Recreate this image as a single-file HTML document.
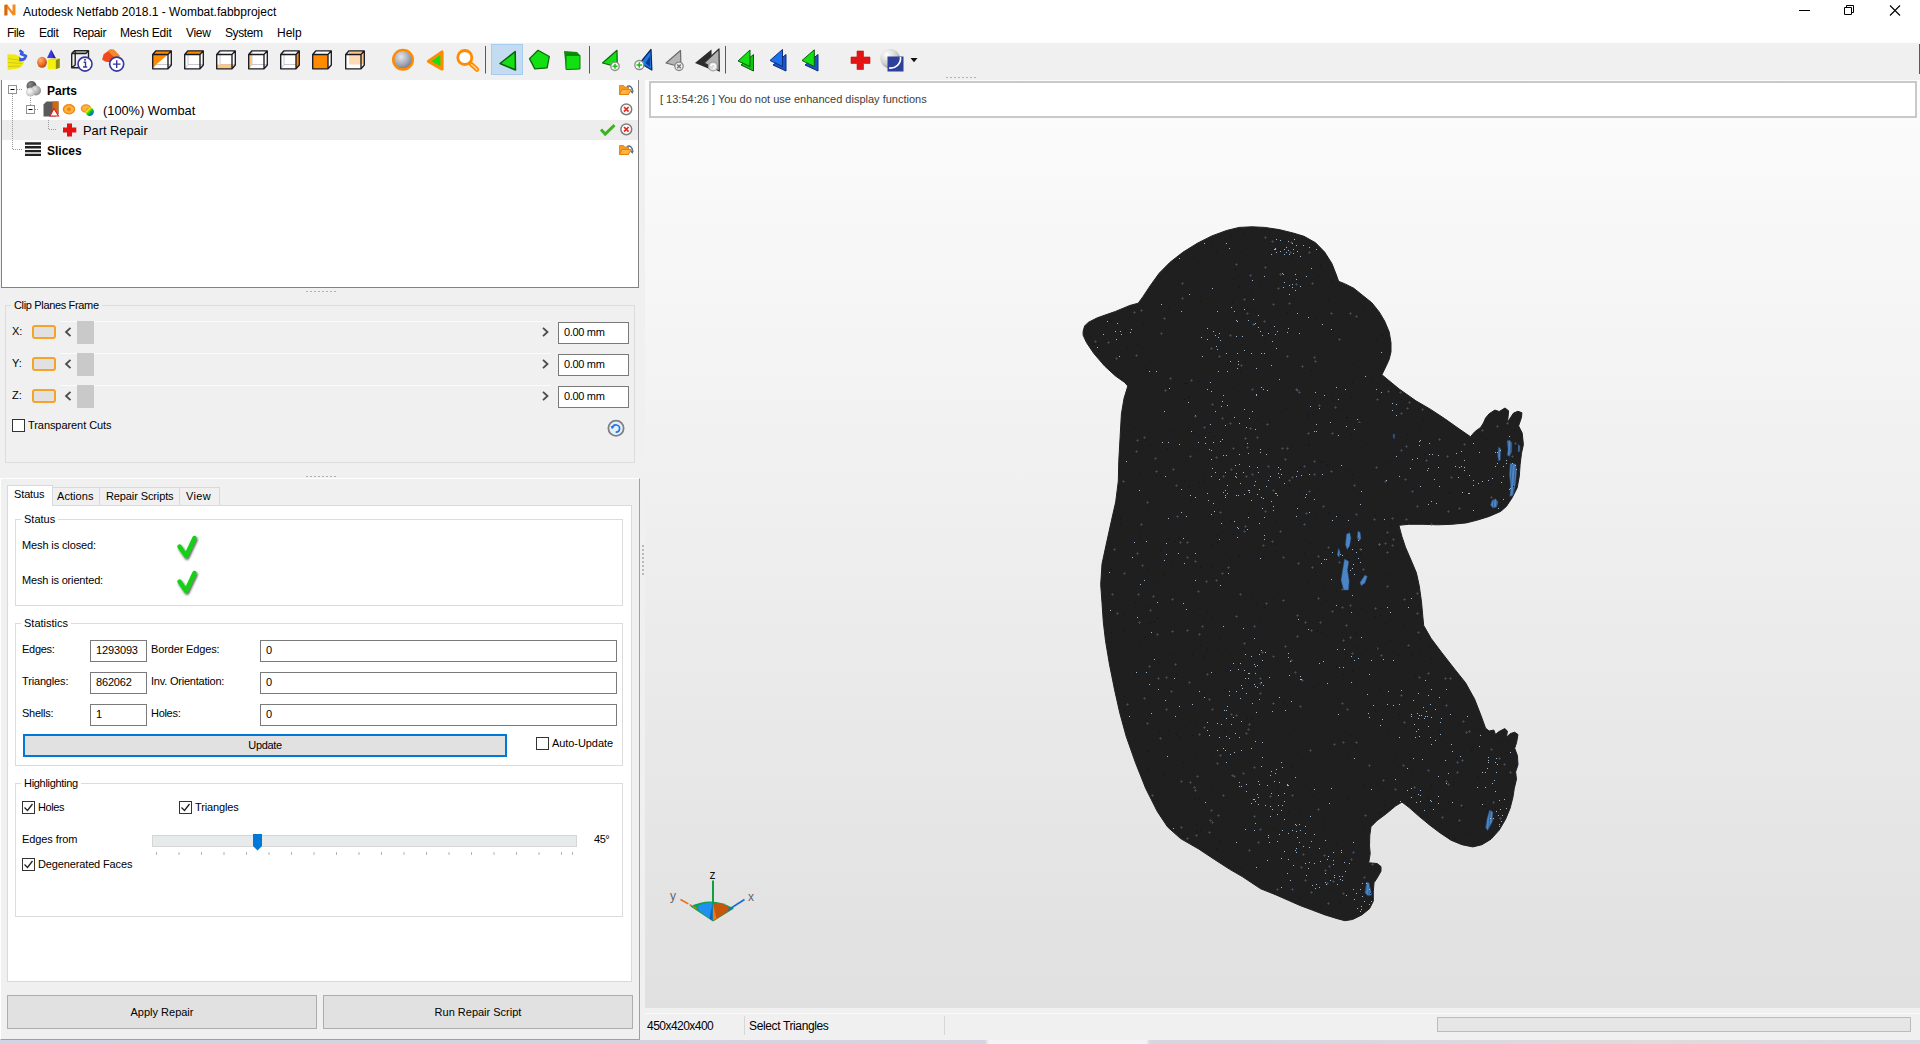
<!DOCTYPE html>
<html><head><meta charset="utf-8"><title>Autodesk Netfabb 2018.1 - Wombat.fabbproject</title>
<style>
html,body{margin:0;padding:0;}
body{width:1920px;height:1044px;overflow:hidden;background:#f0f0f0;font-family:"Liberation Sans",sans-serif;font-size:11px;color:#000;position:relative;}
.a{position:absolute;}
.t{position:absolute;white-space:nowrap;line-height:14px;}
.ui{font-size:12px;}
.inp{position:absolute;box-sizing:border-box;background:#fff;border:1px solid #7a7a7a;height:22px;}
.grp{position:absolute;box-sizing:border-box;border:1px solid #dcdcdc;}
.cb{position:absolute;box-sizing:border-box;width:13px;height:13px;background:#fff;border:1px solid #333;}
.grip{background:repeating-linear-gradient(90deg,#b0b0b0 0 2px,transparent 2px 4px);}
.btn{position:absolute;box-sizing:border-box;background:#e1e1e1;border:1px solid #adadad;}
</style></head><body>
<!-- TITLE BAR -->
<div class="a" id="titlebar" style="left:0;top:0;width:1920px;height:43px;background:#fff;"></div>
<div class="t ui" id="title" style="left:23px;top:5px;">Autodesk Netfabb 2018.1 - Wombat.fabbproject</div>
<!-- MENU -->
<div class="t ui" style="letter-spacing:-0.461px;left:7px;top:26px;">File</div>
<div class="t ui" style="letter-spacing:-0.297px;left:39px;top:26px;">Edit</div>
<div class="t ui" style="letter-spacing:-0.393px;left:73px;top:26px;">Repair</div>
<div class="t ui" style="letter-spacing:-0.179px;left:120px;top:26px;">Mesh Edit</div>
<div class="t ui" style="letter-spacing:-0.324px;left:186px;top:26px;">View</div>
<div class="t ui" style="letter-spacing:-0.419px;left:225px;top:26px;">System</div>
<div class="t ui" style="left:277px;top:26px;">Help</div>
<!-- TOOLBAR -->
<div class="a" id="toolbar" style="left:0;top:43px;width:1920px;height:36px;background:#f0f0f0;"></div>
<!-- TREE PANEL -->
<div class="a" id="tree" style="left:1px;top:80px;width:638px;height:208px;box-sizing:border-box;background:#fff;border:1px solid #828282;border-top:none;"></div>
<!-- VIEWPORT -->
<div class="a" id="viewport" style="left:645px;top:80px;width:1275px;height:928px;background:linear-gradient(#fcfcfc,#e0e0e0);"></div>
<!-- window controls -->
<svg class="a" style="left:1780px;top:0;" width="140" height="24" viewBox="1780 0 140 24">
 <path d="M1799 10.500h11" stroke="#000" stroke-width="1"/>
 <path d="M1844.500 7.500h7v7h-7zM1846.500 7.500v-2h7v7h-2" fill="none" stroke="#000" stroke-width="1"/>
 <path d="M1890 5.500l10 10M1900 5.500l-10 10" stroke="#000" stroke-width="1.100"/>
</svg>
<!-- app icon -->
<svg class="a" style="left:2px;top:1.500px;" width="16" height="16" viewBox="0 0 16 16"><path d="M2.500 13.500V3l2.700-.5l5.300 7V2.500h3v10.500l-2.700.5l-5.300-7v7z" fill="#f58a1f"/><path d="M2.500 13.500V3l2.700-.5V13z" fill="#d9660e"/></svg>
<div class="a" style="left:0;top:42px;width:1920px;height:1px;background:#fdfdfd;"></div>
<div class="a" style="left:1919px;top:44px;width:1px;height:30px;background:#5a5a5a;"></div>
<svg class="a" id="tb" style="left:0;top:43px;" width="960" height="36" viewBox="0 43 960 36">
<defs>
 <radialGradient id="gsph" cx=".4" cy=".35" r=".75"><stop offset="0" stop-color="#e6e6ea"/><stop offset=".5" stop-color="#a9acb8"/><stop offset="1" stop-color="#5f6580"/></radialGradient>
 <radialGradient id="osph" cx=".35" cy=".3" r=".8"><stop offset="0" stop-color="#ffb070"/><stop offset=".6" stop-color="#e86a20"/><stop offset="1" stop-color="#9a3c08"/></radialGradient>
 <radialGradient id="wsph" cx=".35" cy=".3" r=".8"><stop offset="0" stop-color="#ffffff"/><stop offset=".6" stop-color="#d0d0d0"/><stop offset="1" stop-color="#8c8c8c"/></radialGradient>
 <g id="cube"><path d="M0 4.500L3.500 .500H19.500V15L16 19H0z" fill="#fff"/></g>
 <g id="cubel" fill="none" stroke="#1a1a22" stroke-width="1.350" stroke-linejoin="round"><path d="M.7 4.500H16V18.800H.7zM.7 4.500L4 .800H19.300L16 4.500M19.300 .800V15L16 18.800"/></g>
 <g id="cubeb" fill="none" stroke="#b9b9c2" stroke-width=".8"><path d="M4 1V14.500H19M4 14.500L1 18.500"/></g>
</defs>
<!-- icon1 open -->
<path d="M7.300 54.200l8.400.4l4 1.800l4.400 5.500l-2.200 4.400l-3.700 2.100L7.700 70z" fill="#f0e814"/>
<path d="M8 58.500l13 2M8 62.500l14 1M8 66.500l12-.5" stroke="#d4c810" stroke-width="1"/>
<path d="M19.500 50.300l3 2.200l-1.500 1.500l5 2l-1.500 2.800l-3 .6" fill="none" stroke="#3a58e0" stroke-width="2.600" stroke-linejoin="round"/>
<path d="M19 57l6 3.500l-5.500 1z" fill="#3a58e0"/>
<!-- icon2 shapes -->
<ellipse cx="42" cy="62.300" rx="4.900" ry="5.500" fill="url(#osph)"/>
<path d="M47 58l4.100-8.500l4.700 8.700z" fill="#3c3cd8"/><path d="M51.100 49.500l4.700 8.700l-2.500-.3z" fill="#2424a0"/>
<path d="M47.800 59.700h8v9.500h-8z" fill="#f4f010"/><path d="M55.800 59.700l4-1.300v9.300l-4 1.500z" fill="#8e8a10"/><path d="M47.800 59.700l4-1.300h8l-4 1.300z" fill="#d8d420"/>
<!-- icon3 info box -->
<path d="M71.700 53.500L74.500 50.700H88.500V58M71.700 53.500V67.800H79M71.700 53.500H85.800l2.700-2.800M75.200 51.500v13.500l-3.500 2.800" fill="none" stroke="#222" stroke-width="1.400" stroke-linejoin="round"/>
<path d="M76 52.300h10" stroke="#888" stroke-width="1"/>
<circle cx="85" cy="64.100" r="7" fill="#fff" stroke="#3636a0" stroke-width="1.600"/>
<path d="M83.600 62.200h1.900v4.600M83 67h4.200" fill="none" stroke="#3636a0" stroke-width="1.400"/><circle cx="85" cy="59.800" r="1" fill="#3636a0"/>
<!-- icon4 cyl + plus -->
<path d="M102.100 59.700l1.500-5.500l6.500-4.700l3.700.3l5.800 5.900l-5 7l-9-1z" fill="#f04a1a"/><path d="M108 51l2.100-1.500l3.700.3l5.800 5.900l-3 4z" fill="#f28a28"/>
<circle cx="116.700" cy="64.100" r="7" fill="#fff" stroke="#3636a0" stroke-width="1.600"/>
<path d="M112.900 64.100h7.600M116.700 60.300v7.600" stroke="#3636a0" stroke-width="1.400"/>
<!-- cubes -->
<g transform="translate(152,50)"><use href="#cube"/><use href="#cubeb"/><path d="M.7 4.500H16L.7 17.500z" fill="#ff8c00"/><path d="M.7 4.500L4 .800H19.300L16 4.500z" fill="#ff8c00"/><use href="#cubel"/></g>
<g transform="translate(184,50)"><use href="#cube"/><use href="#cubeb"/><path d="M.7 4.500L4 .800H19.300L16 4.500z" fill="#ff8c00"/><use href="#cubel"/></g>
<g transform="translate(216,50)"><use href="#cube"/><use href="#cubeb"/><path d="M1 14.500H19L16 18.500H1z" fill="#ffc77d"/><use href="#cubel"/></g>
<g transform="translate(248,50)"><use href="#cube"/><use href="#cubeb"/><path d="M.7 4.500L4 1V14.500L.7 18.500z" fill="#ffc77d"/><use href="#cubel"/></g>
<g transform="translate(280,50)"><use href="#cube"/><use href="#cubeb"/><path d="M16 4.500L19.300 .800V15L16 18.800z" fill="#ff8c00"/><use href="#cubel"/></g>
<g transform="translate(312,50)"><use href="#cube"/><path d="M.7 4.500H16V18.800H.7z" fill="#ff8c00"/><use href="#cubel"/></g>
<g transform="translate(345,50)"><use href="#cube"/><path d="M4 1H19V14.500H4z" fill="#ffc88a"/><path d="M.7 4.500H16V18.800H.7z" fill="#fff" fill-opacity=".35"/><use href="#cubel"/></g>
<!-- sphere -->
<circle cx="403" cy="59.700" r="9.800" fill="url(#gsph)" stroke="#ff8c00" stroke-width="2.400"/>
<!-- orange tri -->
<path d="M428.500 61.300L442 52v17z" fill="#12e012" stroke="#ff8c00" stroke-width="3.200" stroke-linejoin="round"/>
<!-- magnifier -->
<path d="M471 64l6 5.500" stroke="#ff8c00" stroke-width="4.500" stroke-linecap="round"/><path d="M471.500 64.500l5.500 5" stroke="#ffd9a0" stroke-width="1.200" stroke-linecap="round"/>
<circle cx="464.800" cy="57.500" r="7" fill="#fff" stroke="#ff8c00" stroke-width="2.800"/>
<!-- sep -->
<path d="M485.500 46v27.500M589.500 46v27.500M725.500 46v27.500" stroke="#5a5a5a" stroke-width="1"/>
<!-- selected -->
<rect x="491.500" y="44.500" width="31" height="30" fill="#c4dcf2" stroke="#a6cbee"/>
<path d="M500 63.500L515.200 51.500l.3 18.500z" fill="#12e012" stroke="#0a5a0a" stroke-width="1.500" stroke-linejoin="round"/>
<path d="M538 50.300l11.300 6.200l-2.200 11.400l-12.300 1l-5.300-10.300z" fill="#12e012" stroke="#0a6a0a" stroke-width="1.300" stroke-linejoin="round"/>
<path d="M564 51l13 1l3 3.300v13.700l-14 .5z" fill="#0c8a0c"/><path d="M566 55.300h14v13.700l-14 .5z" fill="#12e012" stroke="#0a7a0a" stroke-width="1"/>
<!-- tri plus -->
<path d="M602.500 63L617 50.300l.3 16.500z" fill="#12e012" stroke="#0a6a0a" stroke-width="1.200" stroke-linejoin="round"/>
<circle cx="615" cy="66.300" r="4.200" fill="#fff" stroke="#8a8a8a" stroke-width="1.300"/><path d="M612.500 66.300h5M615 63.800v5" stroke="#18c018" stroke-width="1.500"/>
<!-- blue tri plus -->
<path d="M640 63L651 49.500l.8 20.500z" fill="#1c7ae8" stroke="#0c2c5c" stroke-width="1.300" stroke-linejoin="round"/><path d="M645.500 63l4.500-7v11z" fill="#0c3c8c"/>
<circle cx="639.300" cy="65" r="4.500" fill="#fff" stroke="#8a8a8a" stroke-width="1.300"/><path d="M636.500 65h5.600M639.300 62.200v5.600" stroke="#18c018" stroke-width="1.600"/>
<!-- gray tri x -->
<path d="M666 63L680.500 50.500l.5 16.500z" fill="#b6b6b6" stroke="#6a6a6a" stroke-width="1.200" stroke-linejoin="round"/>
<circle cx="679" cy="66.300" r="4.200" fill="#eee" stroke="#8a8a8a" stroke-width="1.300"/><path d="M677.200 64.500l3.600 3.600M680.800 64.500l-3.600 3.600" stroke="#7a7a7a" stroke-width="1.500"/>
<!-- dark double undo -->
<path d="M695 63L711.500 49.500l.5 20.500z" fill="#2c2c2c"/><path d="M704 63L719 49l.3 22z" fill="#b2b2b2" stroke="#333" stroke-width="1.300" stroke-linejoin="round"/>
<circle cx="713" cy="66.500" r="4.500" fill="#ddd" stroke="#9a9a9a" stroke-width="1.200"/><path d="M711 66a2.200 2.200 0 1 1 2 2.500" fill="none" stroke="#fff" stroke-width="1.300"/>
<!-- green double -->
<path d="M741 65L753.500 54.500v16.500z" fill="#12c412" stroke="#0a5a0a" stroke-width="1" stroke-linejoin="round"/><path d="M738 61L750 50v16.500z" fill="#12e012" stroke="#0a5a0a" stroke-width="1" stroke-linejoin="round"/>
<!-- blue double -->
<path d="M773 65L786 54.500v16.500z" fill="#1c54c8" stroke="#0c2c7c" stroke-width="1" stroke-linejoin="round"/><path d="M770 60.500L782.500 49.500v17z" fill="#1c70f0" stroke="#0c2c7c" stroke-width="1" stroke-linejoin="round"/>
<!-- green/blue double -->
<path d="M805 65L818 54.500v16.500z" fill="#1c54c8" stroke="#0c2c7c" stroke-width="1" stroke-linejoin="round"/><path d="M802 60.500L814.300 49.800v16.700z" fill="#12e012" stroke="#0a5a0a" stroke-width="1" stroke-linejoin="round"/>
<!-- red cross -->
<path d="M857 51h6.500v6h6.500v6.500h-6.500v6h-6.500v-6h-6v-6.500h6z" fill="#e41414" stroke="#c01010" stroke-width=".6"/>
<!-- sphere + blue square -->
<circle cx="890" cy="58.500" r="9.800" fill="url(#wsph)"/>
<rect x="887.500" y="56.500" width="16" height="15" fill="#2c409c"/><path d="M889 68a10 10 0 0 0 11.500-11" fill="none" stroke="#fff" stroke-width="1.600"/>
<path d="M910.500 58h7l-3.500 4.300z" fill="#111"/>
</svg>

<!-- message box -->
<div class="a" style="left:649px;top:81px;width:1268px;height:37px;box-sizing:border-box;background:#fff;border:2px solid #c9c9c9;"></div>
<div class="t" id="msg" style="left:660px;top:92px;color:#404040;">[ 13:54:26 ] You do not use enhanced display functions</div>
<svg class="a" style="left:645px;top:120px;" width="1275" height="888" viewBox="645 120 1275 888">
<path id="wombat" d="M1239.2 227.4 L1252.0 226.8 L1264.7 227.4 L1279.2 229.6 L1293.8 233.2 L1304.0 236.3 L1315.5 242.7 L1324.6 252.0 L1331.9 263.5 L1336.4 275.0 L1338.6 281.3 L1344.6 283.7 L1353.7 288.2 L1362.8 295.5 L1371.9 302.8 L1379.2 311.9 L1384.6 321.0 L1389.2 331.9 L1391.0 342.8 L1391.0 351.9 L1389.2 359.2 L1386.4 365.6 L1381.9 374.7 L1388.3 380.1 L1399.2 389.0 L1415.9 400.8 L1430.3 409.2 L1444.6 418.6 L1459.0 428.8 L1470.5 436.7 L1474.8 431.7 L1480.6 427.4 L1483.4 423.0 L1485.6 418.0 L1489.2 413.7 L1494.9 410.1 L1499.2 411.5 L1505.0 408.0 L1508.6 410.8 L1507.9 418.7 L1507.1 423.0 L1510.7 417.3 L1513.6 413.0 L1517.9 411.3 L1521.9 412.7 L1521.5 417.3 L1518.6 425.9 L1522.2 433.1 L1523.4 444.6 L1521.5 453.2 L1520.1 464.7 L1519.3 476.2 L1517.2 487.7 L1512.2 497.7 L1506.4 506.4 L1500.7 511.4 L1489.2 516.4 L1477.7 520.0 L1466.2 522.9 L1451.8 524.3 L1437.5 524.8 L1423.1 524.3 L1408.7 524.3 L1398.9 525.3 L1401.9 536.4 L1405.5 547.3 L1411.0 560.0 L1416.4 572.8 L1419.2 585.5 L1421.5 601.9 L1422.8 616.4 L1423.7 625.5 L1431.0 638.3 L1441.9 652.8 L1454.7 669.2 L1465.5 682.7 L1474.6 699.1 L1481.0 715.5 L1485.6 728.2 L1489.2 731.0 L1493.8 730.0 L1495.6 734.6 L1498.3 731.9 L1504.7 728.6 L1507.4 731.0 L1506.5 737.3 L1510.1 733.7 L1514.7 732.2 L1518.0 734.6 L1516.5 742.8 L1514.7 748.3 L1517.4 755.5 L1518.0 764.6 L1515.6 771.9 L1516.5 779.2 L1514.3 788.3 L1512.9 797.4 L1510.1 808.3 L1505.6 819.2 L1499.2 830.1 L1491.0 839.2 L1481.9 844.7 L1472.8 846.9 L1461.9 844.7 L1451.0 840.2 L1440.1 832.9 L1429.2 824.7 L1418.2 815.6 L1409.1 807.5 L1402.0 802.1 L1395.5 806.0 L1386.3 813.7 L1377.1 820.6 L1371.0 826.7 L1369.8 835.2 L1369.5 845.9 L1370.2 853.6 L1368.7 862.8 L1377.1 863.5 L1381.0 866.6 L1381.0 871.2 L1377.1 878.1 L1374.0 882.7 L1373.3 891.9 L1373.3 901.1 L1369.5 908.7 L1361.8 914.9 L1352.6 919.5 L1344.9 920.7 L1337.3 918.7 L1325.0 914.9 L1312.8 910.3 L1300.5 905.7 L1288.2 900.3 L1276.0 894.9 L1260.7 888.8 L1251.5 882.7 L1242.3 876.6 L1229.7 869.3 L1214.2 859.3 L1198.7 849.0 L1180.6 838.6 L1167.6 827.0 L1157.3 811.5 L1145.6 788.2 L1135.3 762.3 L1126.2 736.4 L1119.8 713.1 L1114.6 689.9 L1109.4 664.0 L1105.5 640.7 L1103.3 622.0 L1102.0 602.7 L1100.7 584.6 L1102.0 564.0 L1105.9 545.8 L1111.0 522.6 L1115.7 501.9 L1118.3 481.2 L1118.8 460.5 L1120.1 437.2 L1121.4 414.0 L1124.0 398.4 L1127.8 386.0 L1124.6 382.4 L1115.5 376.0 L1104.6 366.0 L1093.7 353.3 L1086.4 342.4 L1083.1 335.1 L1083.1 331.4 L1084.6 326.0 L1088.2 322.4 L1097.3 317.8 L1115.5 311.4 L1130.0 305.4 L1138.2 303.2 L1142.8 296.9 L1150.0 286.0 L1159.2 273.2 L1170.0 262.3 L1182.8 252.3 L1197.4 243.2 L1211.9 235.9 L1226.5 230.5Z" fill="#1f1f20" stroke="#1f1f20" stroke-width="1" stroke-linejoin="round"/>
<clipPath id="pc"><path d="M1498.6 447.0 L1500.8 449.0 L1500.4 460.0 L1498.6 461.0 L1497.6 455.0ZM1507.0 441.0 L1509.5 440.0 L1511.8 443.0 L1511.6 452.0 L1509.5 456.5 L1507.2 455.0 L1508.0 449.0ZM1518.2 444.5 L1520.0 446.0 L1519.8 451.5 L1518.2 452.0ZM1510.2 463.5 L1515.8 464.0 L1516.6 472.0 L1515.5 484.0 L1513.0 495.5 L1509.8 496.5 L1510.5 486.0 L1509.4 474.0ZM1492.0 500.5 L1495.5 498.8 L1498.0 502.0 L1496.8 507.0 L1492.8 508.0 L1490.6 505.0ZM1346.5 534.0 L1349.8 532.8 L1351.0 538.0 L1349.6 546.0 L1347.2 549.5 L1345.5 545.0ZM1358.0 531.0 L1360.2 532.5 L1361.0 538.5 L1358.8 541.0 L1357.3 537.0ZM1338.6 548.2 L1340.0 552.0 L1339.2 557.3 L1337.3 555.0ZM1344.5 559.0 L1348.8 561.5 L1347.5 570.0 L1349.2 581.0 L1348.5 590.0 L1343.6 590.0 L1341.0 580.0 L1342.8 569.0ZM1365.0 575.0 L1367.3 576.5 L1365.0 583.0 L1361.2 585.8 L1360.0 582.5ZM1489.6 810.0 L1492.9 812.0 L1492.3 822.0 L1487.6 830.5 L1485.6 827.5 L1487.2 818.0ZM1366.5 882.0 L1369.0 883.0 L1371.8 895.0 L1368.0 895.8 L1364.9 893.0ZM1393.3 434.0 L1394.6 434.5 L1394.4 438.5 L1393.2 438.0Z"/></clipPath>
<path d="M1498.6 447.0 L1500.8 449.0 L1500.4 460.0 L1498.6 461.0 L1497.6 455.0ZM1507.0 441.0 L1509.5 440.0 L1511.8 443.0 L1511.6 452.0 L1509.5 456.5 L1507.2 455.0 L1508.0 449.0ZM1518.2 444.5 L1520.0 446.0 L1519.8 451.5 L1518.2 452.0ZM1510.2 463.5 L1515.8 464.0 L1516.6 472.0 L1515.5 484.0 L1513.0 495.5 L1509.8 496.5 L1510.5 486.0 L1509.4 474.0ZM1492.0 500.5 L1495.5 498.8 L1498.0 502.0 L1496.8 507.0 L1492.8 508.0 L1490.6 505.0ZM1346.5 534.0 L1349.8 532.8 L1351.0 538.0 L1349.6 546.0 L1347.2 549.5 L1345.5 545.0ZM1358.0 531.0 L1360.2 532.5 L1361.0 538.5 L1358.8 541.0 L1357.3 537.0ZM1338.6 548.2 L1340.0 552.0 L1339.2 557.3 L1337.3 555.0ZM1344.5 559.0 L1348.8 561.5 L1347.5 570.0 L1349.2 581.0 L1348.5 590.0 L1343.6 590.0 L1341.0 580.0 L1342.8 569.0ZM1365.0 575.0 L1367.3 576.5 L1365.0 583.0 L1361.2 585.8 L1360.0 582.5ZM1489.6 810.0 L1492.9 812.0 L1492.3 822.0 L1487.6 830.5 L1485.6 827.5 L1487.2 818.0ZM1366.5 882.0 L1369.0 883.0 L1371.8 895.0 L1368.0 895.8 L1364.9 893.0ZM1393.3 434.0 L1394.6 434.5 L1394.4 438.5 L1393.2 438.0Z" fill="#4a86c6" stroke="#2a4a78" stroke-width=".5"/>
<path d="M1330.0 420l-9 110M1333.1 420l-9 110M1336.2 420l-9 110M1339.3 420l-9 110M1342.4 420l-9 110M1345.5 420l-9 110M1348.6 420l-9 110M1351.7 420l-9 110M1354.8 420l-9 110M1357.9 420l-9 110M1361.0 420l-9 110M1364.1 420l-9 110M1367.2 420l-9 110M1370.3 420l-9 110M1373.4 420l-9 110M1376.5 420l-9 110M1379.6 420l-9 110M1382.7 420l-9 110M1385.8 420l-9 110M1388.9 420l-9 110M1392.0 420l-9 110M1395.1 420l-9 110M1398.2 420l-9 110M1401.3 420l-9 110M1404.4 420l-9 110M1407.5 420l-9 110M1410.6 420l-9 110M1413.7 420l-9 110M1416.8 420l-9 110M1419.9 420l-9 110M1423.0 420l-9 110M1426.1 420l-9 110M1429.2 420l-9 110M1432.3 420l-9 110M1435.4 420l-9 110M1438.5 420l-9 110M1441.6 420l-9 110M1444.7 420l-9 110M1447.8 420l-9 110M1450.9 420l-9 110M1454.0 420l-9 110M1457.1 420l-9 110M1460.2 420l-9 110M1463.3 420l-9 110M1466.4 420l-9 110M1469.5 420l-9 110M1472.6 420l-9 110M1475.7 420l-9 110M1478.8 420l-9 110M1481.9 420l-9 110M1485.0 420l-9 110M1488.1 420l-9 110M1491.2 420l-9 110M1494.3 420l-9 110M1497.4 420l-9 110M1500.5 420l-9 110M1503.6 420l-9 110M1506.7 420l-9 110M1509.8 420l-9 110M1512.9 420l-9 110M1516.0 420l-9 110M1519.1 420l-9 110M1522.2 420l-9 110M1525.3 420l-9 110M1528.4 420l-9 110M1531.5 420l-9 110M1534.6 420l-9 110M1537.7 420l-9 110M1540.8 420l-9 110M1543.9 420l-9 110M1330.0 800l-9 110M1333.1 800l-9 110M1336.2 800l-9 110M1339.3 800l-9 110M1342.4 800l-9 110M1345.5 800l-9 110M1348.6 800l-9 110M1351.7 800l-9 110M1354.8 800l-9 110M1357.9 800l-9 110M1361.0 800l-9 110M1364.1 800l-9 110M1367.2 800l-9 110M1370.3 800l-9 110M1373.4 800l-9 110M1376.5 800l-9 110M1379.6 800l-9 110M1382.7 800l-9 110M1385.8 800l-9 110M1388.9 800l-9 110M1392.0 800l-9 110M1395.1 800l-9 110M1398.2 800l-9 110M1401.3 800l-9 110M1404.4 800l-9 110M1407.5 800l-9 110M1410.6 800l-9 110M1413.7 800l-9 110M1416.8 800l-9 110M1419.9 800l-9 110M1423.0 800l-9 110M1426.1 800l-9 110M1429.2 800l-9 110M1432.3 800l-9 110M1435.4 800l-9 110M1438.5 800l-9 110M1441.6 800l-9 110M1444.7 800l-9 110M1447.8 800l-9 110M1450.9 800l-9 110M1454.0 800l-9 110M1457.1 800l-9 110M1460.2 800l-9 110M1463.3 800l-9 110M1466.4 800l-9 110M1469.5 800l-9 110M1472.6 800l-9 110M1475.7 800l-9 110M1478.8 800l-9 110M1481.9 800l-9 110M1485.0 800l-9 110M1488.1 800l-9 110M1491.2 800l-9 110M1494.3 800l-9 110M1497.4 800l-9 110M1500.5 800l-9 110M1503.6 800l-9 110M1506.7 800l-9 110M1509.8 800l-9 110M1512.9 800l-9 110M1516.0 800l-9 110M1519.1 800l-9 110M1522.2 800l-9 110M1525.3 800l-9 110M1528.4 800l-9 110M1531.5 800l-9 110M1534.6 800l-9 110M1537.7 800l-9 110M1540.8 800l-9 110M1543.9 800l-9 110" stroke="#1f2a3a" stroke-opacity=".55" stroke-width=".7" fill="none" clip-path="url(#pc)"/>
<path d="M1276 252h1M1296 245h1M1275 249h1M1291 257h1M1276 239h1M1293 253h1M1300 256h1M1286 247h1M1309 247h1M1280 240h1M1288 250h1M1284 249h1M1289 254h1M1297 251h1M1271 254h1M1275 248h1M1274 249h1M1280 251h1M1316 249h1M1294 239h1M1284 254h1M1286 252h1M1288 241h1M1292 243h1M1303 245h1M1293 249h1M1295 274h1M1296 279h1M1300 286h1M1282 273h1M1292 284h1M1306 276h1M1289 285h1M1284 282h1M1283 274h1M1264 276h1M1289 294h1M1295 290h1M1292 287h1M1283 287h1M1248 320h1M1202 356h1M1220 340h1M1231 307h1M1261 353h1M1218 337h1M1217 311h1M1213 331h1M1236 336h1M1216 346h1M1201 337h1M1236 320h1M1181 311h1M1219 333h1M1244 309h1M1215 335h1M1212 288h1M1230 361h1M1234 311h1M1207 328h1M1262 335h1M1217 349h1M1264 353h1M1254 324h1M1276 348h1M1275 334h1M1237 321h1M1255 323h1M1274 326h1M1277 331h1M1260 331h1M1272 341h1M1258 327h1M1244 350h1M1288 328h1M1258 315h1M1268 333h1M1299 333h1M1253 299h1M1287 332h1M1210 382h1M1210 424h1M1261 387h1M1237 353h1M1238 361h1M1251 353h1M1223 395h1M1271 365h1M1211 391h1M1256 368h1M1227 371h1M1218 371h1M1263 389h1M1279 379h1M1237 368h1M1238 364h1M1207 389h1M1267 390h1M1130 332h1M1115 331h1M1117 323h1M1107 321h1M1120 331h1M1116 339h1M1121 334h1M1260 449h1M1181 489h1M1213 503h1M1238 495h1M1249 418h1M1248 453h1M1211 459h1M1249 492h1M1255 429h1M1215 411h1M1227 485h1M1211 476h1M1236 495h1M1209 449h1M1211 514h1M1257 467h1M1236 473h1M1235 465h1M1222 439h1M1214 511h1M1243 472h1M1225 472h1M1239 454h1M1235 476h1M1211 450h1M1205 443h1M1252 411h1M1223 455h1M1215 472h1M1258 472h1M1226 455h1M1227 493h1M1220 441h1M1198 442h1M1195 497h1M1239 464h1M1266 454h1M1249 490h1M1191 431h1M1207 493h1M1279 477h1M1275 493h1M1248 490h1M1249 466h1M1236 477h1M1264 539h1M1306 494h1M1223 492h1M1237 537h1M1266 486h1M1273 510h1M1225 490h1M1251 500h1M1257 494h1M1259 489h1M1238 528h1M1262 508h1M1225 497h1M1270 476h1M1276 493h1M1263 498h1M1259 523h1M1247 529h1M1240 483h1M1268 480h1M1248 517h1M1278 467h1M1264 535h1M1277 495h1M1244 494h1M1278 473h1M1296 476h1M1322 474h1M1273 506h1M1280 469h1M1297 471h1M1281 474h1M1341 465h1M1297 508h1M1314 499h1M1316 431h1M1284 483h1M1309 512h1M1309 474h1M1301 475h1M1305 497h1M1324 395h1M1314 431h1M1354 429h1M1346 426h1M1330 422h1M1310 406h1M1316 424h1M1319 408h1M1338 435h1M1315 392h1M1345 389h1M1338 399h1M1348 520h1M1361 549h1M1336 605h1M1361 637h1M1356 552h1M1352 595h1M1350 570h1M1358 540h1M1352 549h1M1331 579h1M1360 562h1M1336 516h1M1358 558h1M1324 559h1M1326 559h1M1352 568h1M1353 564h1M1332 552h1M1342 555h1M1354 574h1M1438 467h1M1473 485h1M1399 476h1M1420 486h1M1410 468h1M1428 468h1M1419 441h1M1439 486h1M1429 454h1M1434 479h1M1427 470h1M1456 453h1M1420 440h1M1417 458h1M1412 459h1M1464 467h1M1428 504h1M1429 443h1M1438 455h1M1461 451h1M1419 445h1M1432 454h1M1469 475h1M1462 492h1M1482 481h1M1459 467h1M1473 510h1M1464 470h1M1461 466h1M1458 477h1M1488 480h1M1464 460h1M1473 480h1M1455 466h1M1469 493h1M1478 483h1M1503 476h1M1497 463h1M1515 465h1M1516 469h1M1506 463h1M1495 452h1M1510 488h1M1509 489h1M1503 466h1M1512 463h1M1495 466h1M1501 482h1M1500 450h1M1503 499h1M1254 684h1M1255 686h1M1272 711h1M1224 710h1M1255 673h1M1300 676h1M1291 701h1M1236 691h1M1269 677h1M1211 672h1M1251 656h1M1289 675h1M1248 673h1M1240 663h1M1257 687h1M1245 678h1M1229 691h1M1241 685h1M1238 669h1M1259 654h1M1301 679h1M1254 664h1M1285 710h1M1261 650h1M1246 693h1M1245 654h1M1233 663h1M1255 666h1M1255 741h1M1288 657h1M1261 682h1M1252 703h1M1249 673h1M1248 678h1M1279 697h1M1230 670h1M1240 698h1M1259 699h1M1254 638h1M1263 685h1M1265 652h1M1257 665h1M1242 688h1M1262 660h1M1223 626h1M1223 748h1M1229 695h1M1219 737h1M1251 748h1M1235 733h1M1217 723h1M1226 718h1M1231 724h1M1234 752h1M1239 737h1M1227 706h1M1229 738h1M1217 750h1M1226 736h1M1226 710h1M1256 712h1M1241 721h1M1233 717h1M1258 804h1M1295 777h1M1265 805h1M1255 801h1M1253 799h1M1272 809h1M1271 771h1M1275 773h1M1277 814h1M1274 781h1M1284 793h1M1246 784h1M1287 785h1M1267 785h1M1239 782h1M1271 793h1M1262 757h1M1284 801h1M1281 810h1M1258 781h1M1270 816h1M1239 786h1M1254 799h1M1288 785h1M1246 791h1M1261 766h1M1279 782h1M1276 769h1M1282 767h1M1281 762h1M1287 784h1M1241 786h1M1270 775h1M1257 794h1M1262 742h1M1258 797h1M1270 806h1M1254 830h1M1278 795h1M1282 805h1M1292 830h1M1309 847h1M1255 823h1M1299 842h1M1295 850h1M1293 865h1M1279 834h1M1296 852h1M1305 863h1M1281 858h1M1299 824h1M1287 873h1M1305 833h1M1245 829h1M1277 841h1M1333 852h1M1296 825h1M1268 837h1M1281 887h1M1282 830h1M1311 841h1M1267 860h1M1284 819h1M1296 848h1M1284 851h1M1305 826h1M1251 803h1M1288 859h1M1309 862h1M1325 840h1M1310 816h1M1303 846h1M1288 833h1M1269 842h1M1314 834h1M1300 830h1M1295 824h1M1297 837h1M1296 831h1M1268 835h1M1346 895h1M1325 882h1M1342 876h1M1306 875h1M1315 888h1M1342 880h1M1290 880h1M1341 850h1M1345 871h1M1327 859h1M1314 863h1M1333 860h1M1320 861h1M1316 884h1M1326 884h1M1312 885h1M1330 880h1M1328 856h1M1349 863h1M1328 856h1M1333 864h1M1334 875h1M1319 848h1M1337 884h1M1341 852h1M1339 876h1M1334 877h1M1325 873h1M1344 862h1M1308 868h1M1366 883h1M1361 906h1M1364 901h1M1357 908h1M1360 889h1M1371 901h1M1360 911h1M1354 899h1M1369 889h1M1361 909h1M1362 883h1M1362 896h1M1369 904h1M1356 893h1M1413 758h1M1419 736h1M1460 756h1M1452 751h1M1411 714h1M1419 715h1M1439 697h1M1451 744h1M1422 759h1M1431 744h1M1435 709h1M1424 718h1M1440 722h1M1467 716h1M1423 707h1M1418 693h1M1415 737h1M1431 717h1M1435 740h1M1440 734h1M1421 715h1M1418 718h1M1417 713h1M1427 716h1M1426 711h1M1450 714h1M1414 724h1M1413 700h1M1431 689h1M1380 725h1M1446 689h1M1416 731h1M1399 704h1M1411 716h1M1399 737h1M1428 726h1M1425 680h1M1428 695h1M1430 704h1M1425 716h1M1430 800h1M1407 790h1M1438 796h1M1411 788h1M1416 802h1M1420 795h1M1448 773h1M1407 768h1M1400 801h1M1424 810h1M1395 779h1M1438 803h1M1431 801h1M1420 790h1M1420 801h1M1418 794h1M1438 776h1M1411 797h1M1487 768h1M1485 787h1M1482 772h1M1482 804h1M1497 764h1M1496 758h1M1482 772h1M1495 791h1M1499 800h1M1496 772h1M1488 757h1M1510 752h1M1488 762h1M1480 735h1M1485 772h1M1492 783h1M1488 760h1M1494 780h1M1479 746h1M1477 787h1M1506 808h1M1501 821h1M1499 826h1M1493 818h1M1498 815h1M1496 811h1M1500 809h1M1499 824h1M1502 815h1M1490 818h1M1137 617h1M1164 560h1M1146 541h1M1157 602h1M1186 516h1M1132 557h1M1168 518h1M1195 553h1M1183 538h1M1166 543h1M1140 584h1M1190 495h1M1183 603h1M1186 609h1M1165 700h1M1146 672h1M1136 672h1M1175 716h1M1192 704h1M1151 713h1M1167 756h1M1207 730h1M1149 684h1M1174 678h1M1343 667h1M1351 656h1M1308 629h1M1327 683h1M1369 674h1M1339 667h1M1351 682h1M1351 612h1M1354 660h1M1319 663h1M1337 649h1M1288 653h1M1344 649h1M1290 661h1M1393 705h1M1388 691h1M1368 713h1M1373 705h1M1441 718h1M1383 659h1M1382 719h1M1367 694h1M1338 714h1M1369 717h1M1234 417h1M1225 425h1M1195 415h1M1179 444h1M1222 401h1M1221 406h1M1162 442h1M1168 442h1M1205 437h1M1213 442h1M1156 371h1M1178 553h1M1219 539h1M1252 280h1M1386 480h1M1204 243h1M1164 411h1M1256 867h1M1396 415h1M1242 336h1M1492 478h1M1418 729h1M1225 495h1M1226 762h1M1311 268h1M1256 394h1M1103 334h1M1221 523h1M1322 324h1M1392 410h1M1401 690h1M1149 371h1M1207 722h1M1261 497h1M1212 468h1M1179 258h1M1331 788h1M1509 436h1M1179 706h1M1271 501h1M1228 573h1M1207 339h1M1260 558h1M1158 689h1M1189 294h1M1234 521h1M1151 632h1M1390 612h1M1255 481h1M1109 572h1M1340 554h1M1227 405h1M1199 691h1M1166 554h1M1353 889h1M1243 628h1M1495 762h1M1358 658h1M1264 517h1M1205 802h1M1468 493h1M1144 580h1M1219 479h1M1169 388h1M1381 392h1M1256 395h1M1300 679h1M1323 661h1M1329 803h1M1506 460h1M1236 842h1M1221 724h1M1387 704h1M1504 799h1M1154 659h1M1298 619h1M1246 427h1M1411 598h1M1188 402h1M1226 353h1M1308 317h1M1129 716h1M1134 542h1M1195 580h1M1431 501h1M1396 404h1M1396 456h1M1230 754h1M1452 802h1M1332 520h1M1393 660h1M1446 783h1M1139 490h1M1376 389h1M1340 879h1M1384 519h1M1360 504h1M1209 735h1M1229 248h1M1321 563h1M1247 443h1M1433 809h1M1208 500h1M1354 758h1M1387 607h1M1161 304h1M1297 313h1M1226 243h1M1331 329h1M1357 419h1M1184 563h1M1244 409h1M1473 443h1M1119 356h1M1173 828h1M1296 516h1M1436 503h1M1110 610h1M1371 660h1M1278 805h1M1097 347h1M1241 750h1M1220 585h1M1314 789h1M1430 737h1M1259 784h1M1445 760h1M1498 508h1M1392 403h1M1336 387h1M1254 485h1M1371 789h1M1244 670h1M1239 423h1M1479 452h1M1126 461h1M1408 607h1M1381 352h1M1131 329h1M1237 527h1M1260 452h1M1319 887h1M1225 750h1M1181 512h1M1204 697h1M1497 452h1M1165 476h1M1361 491h1M1365 376h1M1353 842h1" stroke="#a9c6e6" stroke-opacity=".9" stroke-width="1" fill="none" transform="translate(0,.5)"/>
<path d="M1304 622.5h3M1305.5 621v3M1384 543.5h3M1385.5 542v3M1373 519.5h3M1374.5 518v3M1251 389.5h3M1252.5 388v3M1345 625.5h3M1346.5 624v3M1308 252.5h3M1309.5 251v3M1357 538.5h3M1358.5 537v3M1342 640.5h3M1343.5 639v3M1405 446.5h3M1406.5 445v3M1259 829.5h3M1260.5 828v3M1298 392.5h3M1299.5 391v3M1449 678.5h3M1450.5 677v3M1492 802.5h3M1493.5 801v3M1462 721.5h3M1463.5 720v3M1193 787.5h3M1194.5 786v3M1282 600.5h3M1283.5 599v3M1206 674.5h3M1207.5 673v3M1116 613.5h3M1117.5 612v3M1189 782.5h3M1190.5 781v3M1456 762.5h3M1457.5 761v3M1323 855.5h3M1324.5 854v3M1243 299.5h3M1244.5 298v3M1460 805.5h3M1461.5 804v3M1135 355.5h3M1136.5 354v3M1253 816.5h3M1254.5 815v3M1352 852.5h3M1353.5 851v3M1174 664.5h3M1175.5 663v3M1465 732.5h3M1466.5 731v3M1170 691.5h3M1171.5 690v3M1271 241.5h3M1272.5 240v3M1232 448.5h3M1233.5 447v3M1358 422.5h3M1359.5 421v3M1346 709.5h3M1347.5 708v3M1163 318.5h3M1164.5 317v3M1386 552.5h3M1387.5 551v3M1140 310.5h3M1141.5 309v3M1240 365.5h3M1241.5 364v3M1404 479.5h3M1405.5 478v3M1219 512.5h3M1220.5 511v3M1148 666.5h3M1149.5 665v3M1269 796.5h3M1270.5 795v3M1262 545.5h3M1263.5 544v3M1304 880.5h3M1305.5 879v3M1235 715.5h3M1236.5 714v3M1186 630.5h3M1187.5 629v3M1208 832.5h3M1209.5 831v3M1209 820.5h3M1210.5 819v3M1378 544.5h3M1379.5 543v3M1490 497.5h3M1491.5 496v3M1407 645.5h3M1408.5 644v3M1279 274.5h3M1280.5 273v3M1266 424.5h3M1267.5 423v3M1276 889.5h3M1277.5 888v3M1211 709.5h3M1212.5 708v3M1376 399.5h3M1377.5 398v3M1263 321.5h3M1264.5 320v3M1267 466.5h3M1268.5 465v3M1441 817.5h3M1442.5 816v3M1341 607.5h3M1342.5 606v3M1122 481.5h3M1123.5 480v3M1247 729.5h3M1248.5 728v3M1375 467.5h3M1376.5 466v3M1288 480.5h3M1289.5 479v3M1286 448.5h3M1287.5 447v3M1376 648.5h3M1377.5 647v3M1444 678.5h3M1445.5 677v3M1113 549.5h3M1114.5 548v3M1259 683.5h3M1260.5 682v3M1175 485.5h3M1176.5 484v3M1146 502.5h3M1147.5 501v3M1157 678.5h3M1158.5 677v3M1355 742.5h3M1356.5 741v3M1194 790.5h3M1195.5 789v3M1402 765.5h3M1403.5 764v3M1136 553.5h3M1137.5 552v3M1317 598.5h3M1318.5 597v3M1215 580.5h3M1216.5 579v3M1138 622.5h3M1139.5 621v3M1307 433.5h3M1308.5 432v3M1264 267.5h3M1265.5 266v3M1179 542.5h3M1180.5 541v3M1327 547.5h3M1328.5 546v3M1261 652.5h3M1262.5 651v3M1264 237.5h3M1265.5 236v3M1151 795.5h3M1152.5 794v3M1403 722.5h3M1404.5 721v3M1152 596.5h3M1153.5 595v3M1364 815.5h3M1365.5 814v3M1227 567.5h3M1228.5 566v3M1302 854.5h3M1303.5 853v3M1256 437.5h3M1257.5 436v3M1406 408.5h3M1407.5 407v3M1244 526.5h3M1245.5 525v3M1291 477.5h3M1292.5 476v3M1271 541.5h3M1272.5 540v3M1111 594.5h3M1112.5 593v3M1322 506.5h3M1323.5 505v3M1181 298.5h3M1182.5 297v3M1246 447.5h3M1247.5 446v3M1295 389.5h3M1296.5 388v3M1342 893.5h3M1343.5 892v3M1243 643.5h3M1244.5 642v3M1244 438.5h3M1245.5 437v3M1349 637.5h3M1350.5 636v3M1221 573.5h3M1222.5 572v3M1309 750.5h3M1310.5 749v3M1194 416.5h3M1195.5 415v3M1430 524.5h3M1431.5 523v3M1458 508.5h3M1459.5 507v3M1208 699.5h3M1209.5 698v3M1446 456.5h3M1447.5 455v3M1222 795.5h3M1223.5 794v3M1427 673.5h3M1428.5 672v3M1324 870.5h3M1325.5 869v3M1490 749.5h3M1491.5 748v3M1405 519.5h3M1406.5 518v3M1411 491.5h3M1412.5 490v3M1279 531.5h3M1280.5 530v3M1135 451.5h3M1136.5 450v3M1374 608.5h3M1375.5 607v3M1133 312.5h3M1134.5 311v3M1328 866.5h3M1329.5 865v3M1176 516.5h3M1177.5 515v3M1317 809.5h3M1318.5 808v3M1289 252.5h3M1290.5 251v3M1272 490.5h3M1273.5 489v3M1299 706.5h3M1300.5 705v3M1253 767.5h3M1254.5 766v3M1156 634.5h3M1157.5 633v3M1172 469.5h3M1173.5 468v3M1155 471.5h3M1156.5 470v3M1341 589.5h3M1342.5 588v3M1253 626.5h3M1254.5 625v3M1450 477.5h3M1451.5 476v3M1338 562.5h3M1339.5 561v3M1511 456.5h3M1512.5 455v3M1387 391.5h3M1388.5 390v3M1198 734.5h3M1199.5 733v3M1334 407.5h3M1335.5 406v3M1248 724.5h3M1249.5 723v3M1272 656.5h3M1273.5 655v3M1327 903.5h3M1328.5 902v3M1296 390.5h3M1297.5 389v3M1217 815.5h3M1218.5 814v3M1331 611.5h3M1332.5 610v3M1229 335.5h3M1230.5 334v3M1498 758.5h3M1499.5 757v3M1171 599.5h3M1172.5 598v3M1349 313.5h3M1350.5 312v3M1417 632.5h3M1418.5 631v3M1384 481.5h3M1385.5 480v3M1211 822.5h3M1212.5 821v3M1400 413.5h3M1401.5 412v3M1318 405.5h3M1319.5 404v3M1211 404.5h3M1212.5 403v3M1141 565.5h3M1142.5 564v3M1203 427.5h3M1204.5 426v3M1205 581.5h3M1206.5 580v3M1458 820.5h3M1459.5 819v3M1349 605.5h3M1350.5 604v3M1403 599.5h3M1404.5 598v3M1371 864.5h3M1372.5 863v3M1421 409.5h3M1422.5 408v3M1242 773.5h3M1243.5 772v3M1186 542.5h3M1187.5 541v3M1245 733.5h3M1246.5 732v3M1330 471.5h3M1331.5 470v3M1330 313.5h3M1331.5 312v3M1514 443.5h3M1515.5 442v3M1456 772.5h3M1457.5 771v3M1311 283.5h3M1312.5 282v3M1313 357.5h3M1314.5 356v3M1313 474.5h3M1314.5 473v3M1301 366.5h3M1302.5 365v3M1391 518.5h3M1392.5 517v3M1295 284.5h3M1296.5 283v3M1296 615.5h3M1297.5 614v3M1143 437.5h3M1144.5 436v3M1230 714.5h3M1231.5 713v3M1341 703.5h3M1342.5 702v3M1351 653.5h3M1352.5 652v3M1310 892.5h3M1311.5 891v3M1445 705.5h3M1446.5 704v3M1310 630.5h3M1311.5 629v3M1413 787.5h3M1414.5 786v3M1447 511.5h3M1448.5 510v3M1230 469.5h3M1231.5 468v3M1198 634.5h3M1199.5 633v3M1313 461.5h3M1314.5 460v3M1378 544.5h3M1379.5 543v3M1186 838.5h3M1187.5 837v3M1160 333.5h3M1161.5 332v3M1194 561.5h3M1195.5 560v3M1425 460.5h3M1426.5 459v3M1188 682.5h3M1189.5 681v3M1197 591.5h3M1198.5 590v3M1195 835.5h3M1196.5 834v3M1164 390.5h3M1165.5 389v3M1215 457.5h3M1216.5 456v3M1400 695.5h3M1401.5 694v3M1190 380.5h3M1191.5 379v3M1245 476.5h3M1246.5 475v3M1252 324.5h3M1253.5 323v3M1427 770.5h3M1428.5 769v3M1231 775.5h3M1232.5 774v3M1249 428.5h3M1250.5 427v3M1342 742.5h3M1343.5 741v3M1291 795.5h3M1292.5 794v3M1249 275.5h3M1250.5 274v3M1146 723.5h3M1147.5 722v3M1143 698.5h3M1144.5 697v3M1468 731.5h3M1469.5 730v3M1246 313.5h3M1247.5 312v3M1115 358.5h3M1116.5 357v3M1235 264.5h3M1236.5 263v3M1218 356.5h3M1219.5 355v3M1137 594.5h3M1138.5 593v3M1319 622.5h3M1320.5 621v3M1416 593.5h3M1417.5 592v3M1181 283.5h3M1182.5 282v3M1219 755.5h3M1220.5 754v3M1154 458.5h3M1155.5 457v3M1331 433.5h3M1332.5 432v3M1284 646.5h3M1285.5 645v3M1416 506.5h3M1417.5 505v3M1107 342.5h3M1108.5 341v3M1159 738.5h3M1160.5 737v3M1180 781.5h3M1181.5 780v3M1301 680.5h3M1302.5 679v3M1286 356.5h3M1287.5 355v3M1353 485.5h3M1354.5 484v3M1290 660.5h3M1291.5 659v3M1222 476.5h3M1223.5 475v3M1265 603.5h3M1266.5 602v3M1284 459.5h3M1285.5 458v3M1491 819.5h3M1492.5 818v3M1210 348.5h3M1211.5 347v3M1399 392.5h3M1400.5 391v3M1338 339.5h3M1339.5 338v3M1496 426.5h3M1497.5 425v3M1126 704.5h3M1127.5 703v3M1235 616.5h3M1236.5 615v3M1300 867.5h3M1301.5 866v3M1308 491.5h3M1309.5 490v3M1201 626.5h3M1202.5 625v3M1359 549.5h3M1360.5 548v3M1123 573.5h3M1124.5 572v3M1294 672.5h3M1295.5 671v3M1506 423.5h3M1507.5 422v3M1277 288.5h3M1278.5 287v3M1445 781.5h3M1446.5 780v3M1303 524.5h3M1304.5 523v3M1326 883.5h3M1327.5 882v3M1297 563.5h3M1298.5 562v3M1210 810.5h3M1211.5 809v3M1303 466.5h3M1304.5 465v3M1169 378.5h3M1170.5 377v3M1447 784.5h3M1448.5 783v3M1382 780.5h3M1383.5 779v3M1394 789.5h3M1395.5 788v3M1438 439.5h3M1439.5 438v3M1233 776.5h3M1234.5 775v3M1350 859.5h3M1351.5 858v3M1463 444.5h3M1464.5 443v3M1165 709.5h3M1166.5 708v3M1355 316.5h3M1356.5 315v3M1461 760.5h3M1462.5 759v3M1332 881.5h3M1333.5 880v3M1362 569.5h3M1363.5 568v3M1251 474.5h3M1252.5 473v3M1094 341.5h3M1095.5 340v3M1368 765.5h3M1369.5 764v3M1386 586.5h3M1387.5 585v3M1221 418.5h3M1222.5 417v3M1165 677.5h3M1166.5 676v3M1481 430.5h3M1482.5 429v3M1503 764.5h3M1504.5 763v3M1229 423.5h3M1230.5 422v3M1311 567.5h3M1312.5 566v3M1317 556.5h3M1318.5 555v3M1408 402.5h3M1409.5 401v3M1171 631.5h3M1172.5 630v3M1189 456.5h3M1190.5 455v3M1239 594.5h3M1240.5 593v3M1264 511.5h3M1265.5 510v3M1186 557.5h3M1187.5 556v3M1272 703.5h3M1273.5 702v3M1416 613.5h3M1417.5 612v3M1363 877.5h3M1364.5 876v3M1314 361.5h3M1315.5 360v3M1149 610.5h3M1150.5 609v3M1203 727.5h3M1204.5 726v3M1400 450.5h3M1401.5 449v3M1418 677.5h3M1419.5 676v3M1391 545.5h3M1392.5 544v3M1272 304.5h3M1273.5 303v3M1291 889.5h3M1292.5 888v3M1386 532.5h3M1387.5 531v3M1140 524.5h3M1141.5 523v3M1333 744.5h3M1334.5 743v3M1259 678.5h3M1260.5 677v3M1380 655.5h3M1381.5 654v3M1290 242.5h3M1291.5 241v3M1288 303.5h3M1289.5 302v3M1499 818.5h3M1500.5 817v3M1296 636.5h3M1297.5 635v3M1136 440.5h3M1137.5 439v3M1180 827.5h3M1181.5 826v3M1305 513.5h3M1306.5 512v3M1257 842.5h3M1258.5 841v3M1196 776.5h3M1197.5 775v3M1392 539.5h3M1393.5 538v3M1243 531.5h3M1244.5 530v3M1281 448.5h3M1282.5 447v3M1355 514.5h3M1356.5 513v3M1216 763.5h3M1217.5 762v3M1282 557.5h3M1283.5 556v3M1248 850.5h3M1249.5 849v3M1509 772.5h3M1510.5 771v3M1259 693.5h3M1260.5 692v3" stroke="#555e68" stroke-opacity=".5" stroke-width="1" fill="none"/>
<path d="M1407 434h1M1370 691h1M1274 681h1M1183 762h1M1320 906h1M1234 721h1M1418 409h1M1352 382h1M1111 632h1M1442 808h1M1255 637h1M1395 756h1M1410 629h1M1194 717h1M1329 606h1M1425 454h1M1204 621h1M1315 572h1M1158 662h1M1211 786h1M1268 330h1M1349 548h1M1333 888h1M1238 754h1M1386 706h1M1445 492h1M1204 477h1M1248 683h1M1150 445h1M1194 353h1M1430 740h1M1200 567h1M1441 823h1M1177 715h1M1389 463h1M1291 446h1M1277 790h1M1333 650h1M1182 658h1M1233 534h1M1273 801h1M1160 475h1M1469 832h1M1184 481h1M1185 726h1M1321 632h1M1346 825h1M1162 418h1M1375 710h1M1225 553h1M1211 617h1M1240 478h1M1193 432h1M1220 638h1M1202 308h1M1308 445h1M1471 750h1M1356 685h1M1386 575h1M1265 499h1M1304 553h1M1315 598h1M1216 252h1M1431 658h1M1209 362h1M1463 807h1M1382 707h1M1258 611h1M1484 806h1M1309 444h1M1149 499h1M1363 306h1M1330 878h1M1274 756h1M1342 632h1M1160 550h1M1179 538h1M1321 462h1M1336 666h1M1371 378h1M1328 300h1M1362 411h1M1439 730h1M1146 369h1M1098 343h1M1291 891h1M1225 409h1M1361 654h1M1330 494h1M1300 898h1M1189 422h1M1114 359h1M1188 430h1M1452 713h1M1358 494h1M1397 570h1M1111 569h1M1252 596h1M1513 486h1M1229 332h1M1343 861h1M1163 575h1M1302 758h1M1331 395h1M1168 730h1M1288 812h1M1355 745h1M1416 728h1M1149 342h1M1466 493h1M1134 428h1M1168 307h1M1172 672h1M1158 346h1M1318 489h1M1150 622h1M1306 498h1M1291 257h1M1353 363h1M1231 236h1M1256 604h1M1252 719h1M1247 718h1M1209 432h1M1411 771h1M1166 501h1M1456 758h1M1243 648h1M1336 844h1M1370 893h1M1148 509h1M1330 321h1M1359 423h1M1225 649h1M1168 539h1M1199 482h1M1327 464h1M1396 390h1M1294 729h1M1268 449h1M1258 446h1M1383 335h1M1173 655h1M1265 356h1M1403 625h1M1444 702h1M1323 821h1M1247 308h1M1316 318h1M1347 799h1M1235 313h1M1377 733h1M1338 826h1M1210 764h1M1360 553h1M1200 645h1M1307 582h1M1111 321h1M1349 701h1M1211 544h1M1305 785h1M1257 865h1M1296 505h1M1294 477h1M1259 285h1M1380 334h1M1150 522h1M1347 757h1M1278 434h1M1245 843h1M1143 324h1M1472 747h1M1178 538h1M1492 461h1M1148 768h1M1369 554h1M1477 776h1M1175 261h1M1347 555h1M1176 674h1M1224 730h1M1478 778h1M1146 607h1M1498 827h1M1193 611h1M1223 346h1M1409 754h1M1231 520h1M1388 732h1M1287 312h1M1127 347h1M1365 482h1M1245 351h1M1141 715h1M1345 653h1M1420 650h1M1262 677h1M1248 513h1M1244 677h1M1238 473h1M1453 782h1M1379 812h1M1253 673h1M1194 448h1M1486 439h1M1250 311h1M1147 670h1M1196 754h1M1183 836h1M1238 557h1M1173 431h1M1270 422h1M1363 784h1M1227 362h1M1430 646h1M1345 450h1M1241 867h1M1124 614h1M1264 338h1M1415 676h1M1291 767h1M1376 339h1M1316 515h1M1309 722h1M1385 623h1M1428 799h1M1125 330h1M1106 341h1M1502 444h1M1276 551h1M1331 423h1M1424 459h1M1453 784h1M1419 638h1M1375 515h1M1311 370h1M1286 408h1M1145 366h1M1317 631h1M1448 492h1M1154 800h1M1414 794h1M1137 344h1M1140 473h1M1190 677h1M1398 766h1M1275 545h1M1289 485h1M1283 703h1M1394 455h1M1332 330h1M1241 252h1M1120 524h1M1495 808h1M1245 445h1M1145 637h1M1450 493h1M1162 303h1M1185 730h1M1167 448h1M1419 738h1M1217 542h1M1239 555h1M1430 411h1M1346 892h1M1217 535h1M1450 700h1M1212 519h1M1192 735h1M1233 387h1M1264 607h1M1259 620h1M1212 242h1M1378 462h1M1299 491h1M1202 266h1M1214 436h1M1294 243h1M1467 479h1M1278 593h1M1300 467h1M1412 577h1M1430 807h1M1474 731h1M1378 548h1M1317 630h1M1313 795h1M1412 655h1M1345 857h1M1107 558h1M1157 618h1M1148 750h1M1298 737h1M1219 840h1M1423 420h1M1232 302h1M1139 537h1M1204 694h1M1133 460h1M1263 556h1M1274 641h1M1480 802h1M1184 399h1M1285 674h1M1349 471h1M1516 446h1M1176 734h1M1188 397h1M1200 301h1M1397 556h1M1410 759h1M1307 417h1M1313 687h1M1226 671h1M1177 386h1M1487 810h1M1454 797h1M1332 281h1M1297 847h1M1379 689h1M1387 484h1M1477 729h1M1174 541h1M1381 608h1M1258 399h1M1184 383h1M1266 710h1M1350 735h1M1352 474h1M1233 279h1M1376 648h1M1285 240h1M1352 671h1M1243 233h1M1446 661h1M1456 763h1M1475 504h1M1257 420h1M1218 503h1M1139 643h1M1269 783h1M1170 596h1M1216 848h1M1212 567h1M1313 414h1M1318 275h1M1237 426h1M1440 761h1M1390 640h1M1462 741h1M1109 320h1M1515 765h1M1154 621h1M1357 647h1M1307 415h1M1198 381h1M1217 649h1M1224 689h1M1195 799h1M1124 631h1M1397 594h1M1279 249h1M1314 869h1M1399 714h1M1228 762h1M1337 515h1M1314 420h1M1210 843h1M1237 762h1M1245 361h1M1351 659h1M1501 434h1M1186 383h1M1300 520h1M1221 801h1M1317 301h1M1390 390h1M1384 805h1M1401 399h1M1320 265h1M1245 858h1M1239 287h1M1240 371h1M1274 655h1M1317 269h1M1277 787h1M1199 798h1M1191 501h1M1326 600h1M1387 384h1M1172 562h1M1207 612h1M1124 709h1M1266 264h1M1454 838h1M1159 731h1M1349 559h1M1135 673h1M1145 322h1M1343 674h1M1433 800h1M1145 440h1M1148 569h1M1382 788h1M1297 859h1M1448 802h1M1235 269h1M1514 430h1M1273 828h1M1506 752h1M1203 656h1M1148 623h1M1113 548h1M1120 518h1M1441 740h1M1277 268h1M1262 330h1M1284 273h1M1270 325h1M1154 421h1M1366 666h1M1273 813h1M1198 262h1M1328 512h1M1192 654h1M1482 746h1M1207 649h1M1211 754h1M1197 830h1M1338 408h1M1366 444h1M1351 397h1M1147 751h1M1204 481h1M1491 802h1M1348 875h1M1356 632h1M1226 492h1M1333 400h1M1364 826h1M1274 814h1M1323 587h1M1349 612h1M1380 615h1M1325 393h1M1139 533h1M1213 627h1M1310 543h1M1163 775h1M1206 370h1M1169 285h1M1313 349h1M1365 644h1M1357 561h1M1351 434h1M1287 705h1M1179 736h1M1340 903h1M1353 609h1M1419 429h1M1247 528h1M1405 726h1M1252 290h1M1398 655h1M1408 647h1M1361 608h1M1375 616h1M1124 696h1M1391 525h1M1157 583h1M1241 344h1M1362 547h1M1156 475h1M1277 830h1M1135 602h1M1290 611h1M1430 644h1M1346 417h1M1323 828h1M1297 429h1M1154 390h1M1275 521h1M1347 417h1M1355 557h1M1431 785h1M1323 461h1M1196 722h1M1275 702h1M1196 824h1M1200 830h1M1276 507h1M1336 591h1M1323 617h1M1498 743h1M1441 420h1M1098 351h1M1300 812h1M1094 344h1M1222 569h1M1189 487h1" stroke="#111214" stroke-width="1" fill="none" transform="translate(0,.5)"/>
<g>
<path d="M690.500 906.500Q712 895.500 734 908.500L713 921.500z" fill="#12a04a"/>
<path d="M698 906Q705 902 712.500 902.500V920.500L698.500 910.500z" fill="#1e90f0"/>
<path d="M713 903Q721 902.500 727 905.500L730 910L714 920.500z" fill="#c8560a"/>
<path d="M712.500 904V920.500L709.500 918.500z" fill="#1c5cc0"/><path d="M713 904V920.500L716.500 918.500z" fill="#f07a10"/>
<path d="M713 880.500V904" stroke="#10a040" stroke-width="2"/>
<path d="M680.500 899.500L696.500 908.500" stroke="#f06a10" stroke-width="1.600" stroke-dasharray="9 1.500 2.500 1.500"/>
<path d="M744.500 899.500L728 910" stroke="#1c6cd0" stroke-width="1.600"/>
</g>
<text x="709.500" y="878.500" font-family="Liberation Sans, sans-serif" font-size="12" fill="#111">z</text>
<text x="670" y="900" font-family="Liberation Sans, sans-serif" font-size="12" fill="#666">y</text>
<text x="748" y="900.500" font-family="Liberation Sans, sans-serif" font-size="12" fill="#666">x</text>
</svg>
<!-- ===== TREE CONTENT ===== -->
<div class="a" style="left:2px;top:120px;width:636px;height:20px;background:#ededed;"></div>
<svg class="a" style="left:0;top:78px;" width="640" height="90" viewBox="0 78 640 90">
 <g stroke="#9a9a9a" stroke-width="1" stroke-dasharray="1 1" fill="none">
  <path d="M12.5 94V150M13 149.5H23M17 89.5H22M30.5 98V105M35 109.5H39M48.5 120V130M49 129.5H57"/>
 </g>
 <!-- expanders -->
 <g fill="#fff" stroke="#919191"><rect x="8.5" y="85.5" width="8" height="8"/><rect x="26.5" y="105.5" width="8" height="8"/></g>
 <path d="M10.5 89.5h4M28.5 109.5h4" stroke="#000" stroke-width="1"/>
 <!-- parts spheres -->
 <defs>
  <radialGradient id="sg1" cx=".35" cy=".35" r=".7"><stop offset="0" stop-color="#8a8a8a"/><stop offset="1" stop-color="#3c3c3c"/></radialGradient>
  <radialGradient id="sg2" cx=".35" cy=".35" r=".7"><stop offset="0" stop-color="#e8e8e8"/><stop offset="1" stop-color="#8a8a8a"/></radialGradient>
  <radialGradient id="sg3" cx=".4" cy=".4" r=".7"><stop offset="0" stop-color="#ffffff"/><stop offset="1" stop-color="#b0b0b0"/></radialGradient>
  <linearGradient id="rainbow" x1="0" x2="1" y1="0" y2="1"><stop offset="0" stop-color="#f00"/><stop offset=".3" stop-color="#ee0"/><stop offset=".55" stop-color="#0c0"/><stop offset=".8" stop-color="#06f"/><stop offset="1" stop-color="#b0f"/></linearGradient>
 </defs>
 <circle cx="31.5" cy="86" r="5" fill="url(#sg1)"/>
 <circle cx="36" cy="90.5" r="5" fill="url(#sg2)"/>
 <circle cx="30.5" cy="92" r="4.6" fill="url(#sg3)"/>
 <!-- part icon -->
 <path d="M43.5 104.5l3-3h12v12l-3 3h-12z" fill="#5a5a5a"/>
 <path d="M52.5 101.5h6v12l-2 2h-4z" fill="#d06a10"/>
 <path d="M50 116l4-7.5 4.5 7.5z" fill="#fff" stroke="#e02020" stroke-width="1.2"/>
 <!-- eye -->
 <ellipse cx="69" cy="109.3" rx="5.6" ry="4.5" fill="#ffb347" stroke="#f08a10" stroke-width="1.4"/>
 <circle cx="69" cy="109.3" r="2" fill="#f08a10"/>
 <!-- color wheel -->
 <ellipse cx="86" cy="108.5" rx="4.6" ry="3.6" fill="#ffb347" stroke="#f08a10" stroke-width="1.3"/>
 <circle cx="89.7" cy="111.7" r="4.2" fill="url(#rainbow)"/>
 <!-- red cross -->
 <path d="M67 123.5h5v4h4.3v5H72v4h-5v-4h-4v-5h4z" fill="#e41212"/>
 <!-- slices -->
 <path d="M25 143.5h16M25 147.3h16M25 151.1h16M25 154.9h16" stroke="#222" stroke-width="2.4"/>
 <!-- right icons -->
 <g id="fold1">
  <path d="M619.5 85.5h4l1 1.5h4v7.5h-9z" fill="#f79a1e" stroke="#d97a08" stroke-width=".8"/>
  <path d="M619.5 94.5l2.5-5h9l-2.5 5z" fill="#ffb347" stroke="#d97a08" stroke-width=".8"/>
  <path d="M627 86.5a3.6 3.6 0 0 1 5 4.5" fill="none" stroke="#5a6a8a" stroke-width="1.4"/>
  <path d="M630 91.5l3.8-1.2-1.2 3.4z" fill="#5a6a8a"/>
 </g>
 <use href="#fold1" y="60"/>
 <g id="xc"><circle cx="626.3" cy="109.3" r="5.4" fill="#fff" stroke="#7d7d7d" stroke-width="1.5"/><path d="M624 107l4.6 4.6M628.6 107l-4.6 4.6" stroke="#e8281e" stroke-width="1.7"/></g>
 <use href="#xc" y="20"/>
 <path d="M601 129.500l4.200 4.500l9.300-8.800" fill="none" stroke="#3cb422" stroke-width="3" stroke-linejoin="miter"/>
</svg>
<div class="t ui" style="left:47px;top:84px;font-weight:bold;">Parts</div>
<div class="t ui" style="left:103px;top:104px;font-size:12.8px;">(100%) Wombat</div>
<div class="t ui" style="left:83px;top:124px;font-size:12.8px;">Part Repair</div>
<div class="t ui" style="left:47px;top:144px;font-weight:bold;">Slices</div>
<!-- splitter grips -->
<div class="a grip" style="left:306px;top:291px;width:30px;height:1px;"></div>
<div class="a grip" style="left:306px;top:476px;width:30px;height:1px;"></div>
<div class="a grip" style="left:946px;top:77px;width:30px;height:1px;"></div>
<div class="a" style="left:642px;top:545px;width:2px;height:30px;background:repeating-linear-gradient(180deg,#b8b8b8 0 2px,transparent 2px 4px);"></div>

<!-- ===== CLIP PLANES ===== -->
<div class="grp" style="left:5px;top:305px;width:630px;height:158px;"></div>
<div class="t" style="letter-spacing:-0.340px;left:11px;top:298px;background:#f0f0f0;padding:0 3px;">Clip Planes Frame</div>
<!-- rows -->
<div class="a" style="left:60px;top:321px;width:491px;height:1px;background:#fbfbfb;"></div>
<div class="t" style="left:12px;top:324px;">X:</div>
<div class="a" style="left:32px;top:325px;width:24px;height:14px;box-sizing:border-box;border:2px solid #f5a42a;border-radius:3px;background:#e1e1e3;"></div>
<svg class="a" style="left:63px;top:326px;" width="10" height="12" viewBox="0 0 10 12"><path d="M7.5 1.8L3 6l4.500 4.200" fill="none" stroke="#4a4a4a" stroke-width="1.8"/></svg>
<div class="a" style="left:77px;top:321px;width:17px;height:23px;background:#c9c9c9;"></div>
<svg class="a" style="left:540px;top:326px;" width="10" height="12" viewBox="0 0 10 12"><path d="M3 1.800L7.500 6L3 10.200" fill="none" stroke="#4a4a4a" stroke-width="1.800"/></svg>
<div class="inp" style="left:558px;top:322px;width:71px;"></div><div class="t" style="letter-spacing:-0.328px;left:564px;top:325px;">0.00 mm</div>
<div class="a" style="left:60px;top:353px;width:491px;height:1px;background:#fbfbfb;"></div>
<div class="t" style="left:12px;top:356px;">Y:</div>
<div class="a" style="left:32px;top:357px;width:24px;height:14px;box-sizing:border-box;border:2px solid #f5a42a;border-radius:3px;background:#e1e1e3;"></div>
<svg class="a" style="left:63px;top:358px;" width="10" height="12" viewBox="0 0 10 12"><path d="M7.5 1.8L3 6l4.500 4.200" fill="none" stroke="#4a4a4a" stroke-width="1.8"/></svg>
<div class="a" style="left:77px;top:353px;width:17px;height:23px;background:#c9c9c9;"></div>
<svg class="a" style="left:540px;top:358px;" width="10" height="12" viewBox="0 0 10 12"><path d="M3 1.800L7.500 6L3 10.200" fill="none" stroke="#4a4a4a" stroke-width="1.800"/></svg>
<div class="inp" style="left:558px;top:354px;width:71px;"></div><div class="t" style="letter-spacing:-0.328px;left:564px;top:357px;">0.00 mm</div>
<div class="a" style="left:60px;top:385px;width:491px;height:1px;background:#fbfbfb;"></div>
<div class="t" style="left:12px;top:388px;">Z:</div>
<div class="a" style="left:32px;top:389px;width:24px;height:14px;box-sizing:border-box;border:2px solid #f5a42a;border-radius:3px;background:#e1e1e3;"></div>
<svg class="a" style="left:63px;top:390px;" width="10" height="12" viewBox="0 0 10 12"><path d="M7.5 1.8L3 6l4.500 4.200" fill="none" stroke="#4a4a4a" stroke-width="1.8"/></svg>
<div class="a" style="left:77px;top:385px;width:17px;height:23px;background:#c9c9c9;"></div>
<svg class="a" style="left:540px;top:390px;" width="10" height="12" viewBox="0 0 10 12"><path d="M3 1.800L7.500 6L3 10.200" fill="none" stroke="#4a4a4a" stroke-width="1.800"/></svg>
<div class="inp" style="left:558px;top:386px;width:71px;"></div><div class="t" style="letter-spacing:-0.328px;left:564px;top:389px;">0.00 mm</div>

<div class="cb" style="left:12px;top:419px;"></div>
<div class="t" style="letter-spacing:-0.067px;left:28px;top:418px;">Transparent Cuts</div>
<svg class="a" style="left:606px;top:418px;" width="20" height="20" viewBox="0 0 20 20"><circle cx="10" cy="10.3" r="7.6" fill="#e8eef8" stroke="#7d8088" stroke-width="1.8"/><path d="M6.5 9.5a3.6 3.6 0 1 1 3.2 4.6" fill="none" stroke="#1e78e6" stroke-width="1.6"/><path d="M4.6 8l4 .3-2.6 3z" fill="#1e78e6"/></svg>

<!-- ===== LOWER PANEL ===== -->
<div class="a" style="left:0;top:478px;width:640px;height:562px;box-sizing:border-box;border-top:1px solid #fff;border-left:1px solid #fff;border-right:1px solid #a0a0a0;border-bottom:1px solid #a0a0a0;"></div>
<!-- tab page -->
<div class="a" style="left:7px;top:505px;width:625px;height:477px;box-sizing:border-box;background:#fff;border:1px solid #d9d9d9;"></div>
<!-- tabs -->
<div class="a" style="left:52px;top:487px;width:48px;height:18px;box-sizing:border-box;border:1px solid #d9d9d9;border-bottom:none;background:#f0f0f0;"></div>
<div class="a" style="left:99px;top:487px;width:81px;height:18px;box-sizing:border-box;border:1px solid #d9d9d9;border-bottom:none;background:#f0f0f0;"></div>
<div class="a" style="left:179px;top:487px;width:41px;height:18px;box-sizing:border-box;border:1px solid #d9d9d9;border-bottom:none;background:#f0f0f0;"></div>
<div class="a" style="left:7px;top:485px;width:46px;height:21px;box-sizing:border-box;border:1px solid #d9d9d9;border-bottom:none;background:#fff;"></div>
<div class="t" style="letter-spacing:-0.131px;left:14px;top:487px;">Status</div>
<div class="t" style="letter-spacing:0.060px;left:57px;top:489px;">Actions</div>
<div class="t" style="letter-spacing:-0.113px;left:106px;top:489px;">Repair Scripts</div>
<div class="t" style="letter-spacing:0.336px;left:186px;top:489px;">View</div>
<!-- status group -->
<div class="grp" style="left:15px;top:519px;width:608px;height:87px;"></div>
<div class="t" style="left:21px;top:512px;background:#fff;padding:0 3px;">Status</div>
<div class="t" style="letter-spacing:-0.121px;left:22px;top:538px;">Mesh is closed:</div>
<div class="t" style="letter-spacing:-0.163px;left:22px;top:573px;">Mesh is oriented:</div>
<svg class="a" style="left:174px;top:533px;" width="30" height="30" viewBox="0 0 30 30"><defs><filter id="ds" x="-30%" y="-30%" width="170%" height="170%"><feDropShadow dx="1" dy="1.5" stdDeviation="1.1" flood-color="#000" flood-opacity=".7"/></filter></defs><path d="M5.5 13.5l6.5 9.5L20.5 5" fill="none" stroke="#14d014" stroke-width="4.400" stroke-linecap="round" stroke-linejoin="round" filter="url(#ds)"/></svg>
<svg class="a" style="left:174px;top:568px;" width="30" height="30" viewBox="0 0 30 30"><path d="M5.5 13.5l6.5 9.5L20.5 5" fill="none" stroke="#14d014" stroke-width="4.400" stroke-linecap="round" stroke-linejoin="round" filter="url(#ds)"/></svg>
<!-- statistics group -->
<div class="grp" style="left:15px;top:623px;width:608px;height:143px;"></div>
<div class="t" style="left:21px;top:616px;background:#fff;padding:0 3px;">Statistics</div>
<div class="t" style="letter-spacing:-0.275px;left:22px;top:642px;">Edges:</div>
<div class="t" style="letter-spacing:-0.159px;left:22px;top:674px;">Triangles:</div>
<div class="t" style="letter-spacing:-0.233px;left:22px;top:706px;">Shells:</div>
<div class="inp" style="left:90px;top:640px;width:57px;"></div><div class="t" style="letter-spacing:-0.140px;left:96px;top:643px;">1293093</div>
<div class="inp" style="left:90px;top:672px;width:57px;"></div><div class="t" style="letter-spacing:-0.178px;left:96px;top:675px;">862062</div>
<div class="inp" style="left:90px;top:704px;width:57px;"></div><div class="t" style="left:96px;top:707px;">1</div>
<div class="t" style="letter-spacing:-0.141px;left:151px;top:642px;">Border Edges:</div>
<div class="t" style="letter-spacing:-0.214px;left:151px;top:674px;">Inv. Orientation:</div>
<div class="t" style="letter-spacing:-0.298px;left:151px;top:706px;">Holes:</div>
<div class="inp" style="left:260px;top:640px;width:357px;"></div><div class="t" style="left:266px;top:643px;">0</div>
<div class="inp" style="left:260px;top:672px;width:357px;"></div><div class="t" style="left:266px;top:675px;">0</div>
<div class="inp" style="left:260px;top:704px;width:357px;"></div><div class="t" style="left:266px;top:707px;">0</div>
<div class="btn" style="left:23px;top:734px;width:484px;height:23px;border:2px solid #0078d7;"></div>
<div class="t" style="letter-spacing:-0.347px;left:23px;top:738px;width:484px;text-align:center;">Update</div>
<div class="cb" style="left:536px;top:737px;"></div>
<div class="t" style="letter-spacing:-0.070px;left:552px;top:736px;">Auto-Update</div>
<!-- highlighting group -->
<div class="grp" style="left:15px;top:783px;width:608px;height:134px;"></div>
<div class="t" style="letter-spacing:-0.307px;left:21px;top:776px;background:#fff;padding:0 3px;">Highlighting</div>
<div class="cb" style="left:22px;top:801px;"><svg width="11" height="11" viewBox="0 0 11 11" style="display:block"><path d="M1.500 5.500l3 3L9.500 2" fill="none" stroke="#222" stroke-width="1.300"/></svg></div><div class="t" style="letter-spacing:-0.385px;left:38px;top:800px;">Holes</div>
<div class="cb" style="left:179px;top:801px;"><svg width="11" height="11" viewBox="0 0 11 11" style="display:block"><path d="M1.500 5.500l3 3L9.500 2" fill="none" stroke="#222" stroke-width="1.300"/></svg></div><div class="t" style="letter-spacing:-0.149px;left:195px;top:800px;">Triangles</div>
<div class="t" style="letter-spacing:-0.095px;left:22px;top:832px;">Edges from</div>
<div class="a" style="left:152px;top:835px;width:425px;height:12px;box-sizing:border-box;background:#e7eaea;border:1px solid #d6d6d6;"></div>
<svg class="a" style="left:150px;top:832px;" width="430" height="26" viewBox="150 832 430 26"><path d="M253 834h9v12l-4.500 4.500l-4.500-4.500z" fill="#0078d7"/><g stroke="#b4b4b4" stroke-width="1"><path d="M156.5 852v3"/><path d="M179.0 852v3"/><path d="M201.5 852v3"/><path d="M224.0 852v3"/><path d="M246.5 852v3"/><path d="M269.0 852v3"/><path d="M291.5 852v3"/><path d="M314.0 852v3"/><path d="M336.5 852v3"/><path d="M359.0 852v3"/><path d="M381.5 852v3"/><path d="M404.0 852v3"/><path d="M426.5 852v3"/><path d="M449.0 852v3"/><path d="M471.5 852v3"/><path d="M494.0 852v3"/><path d="M516.5 852v3"/><path d="M539.0 852v3"/><path d="M561.5 852v3"/><path d="M572.5 852v3"/></g></svg>
<div class="t" style="letter-spacing:-0.447px;left:594px;top:832px;">45°</div>
<div class="cb" style="left:22px;top:858px;"><svg width="11" height="11" viewBox="0 0 11 11" style="display:block"><path d="M1.500 5.500l3 3L9.500 2" fill="none" stroke="#222" stroke-width="1.300"/></svg></div><div class="t" style="letter-spacing:-0.137px;left:38px;top:857px;">Degenerated Faces</div>
<!-- bottom buttons -->
<div class="btn" style="left:7px;top:995px;width:310px;height:34px;"></div>
<div class="t" style="left:7px;top:1005px;width:310px;text-align:center;">Apply Repair</div>
<div class="btn" style="left:323px;top:995px;width:310px;height:34px;"></div>
<div class="t" style="left:323px;top:1005px;width:310px;text-align:center;">Run Repair Script</div>

<!-- status bar -->
<div class="a" style="left:645px;top:1013px;width:1275px;height:1px;background:#fafafa;"></div>
<div class="t ui" style="letter-spacing:-0.534px;left:647px;top:1019px;">450x420x400</div>
<div class="a" style="left:744px;top:1016px;width:1px;height:19px;background:#d7d7d7;"></div>
<div class="t ui" style="letter-spacing:-0.368px;left:749px;top:1019px;">Select Triangles</div>
<div class="a" style="left:944px;top:1016px;width:1px;height:19px;background:#d7d7d7;"></div>
<div class="a" style="left:1437px;top:1017px;width:474px;height:15px;box-sizing:border-box;background:#e6e6e6;border:1px solid #bcbcbc;"></div>
<!-- bottom strip (desktop peeking) -->
<div class="a" style="left:0;top:1040px;width:1920px;height:4px;background:linear-gradient(90deg,#d3d3e3 0,#d6d4e2 51.300%,#f3f2f4 51.500%,#f3f2f4 59.700%,#d6d5e0 59.900%,#dad8e0 75%,#e2dadc 86%,#d8dae4 100%);"></div>

</body></html>
